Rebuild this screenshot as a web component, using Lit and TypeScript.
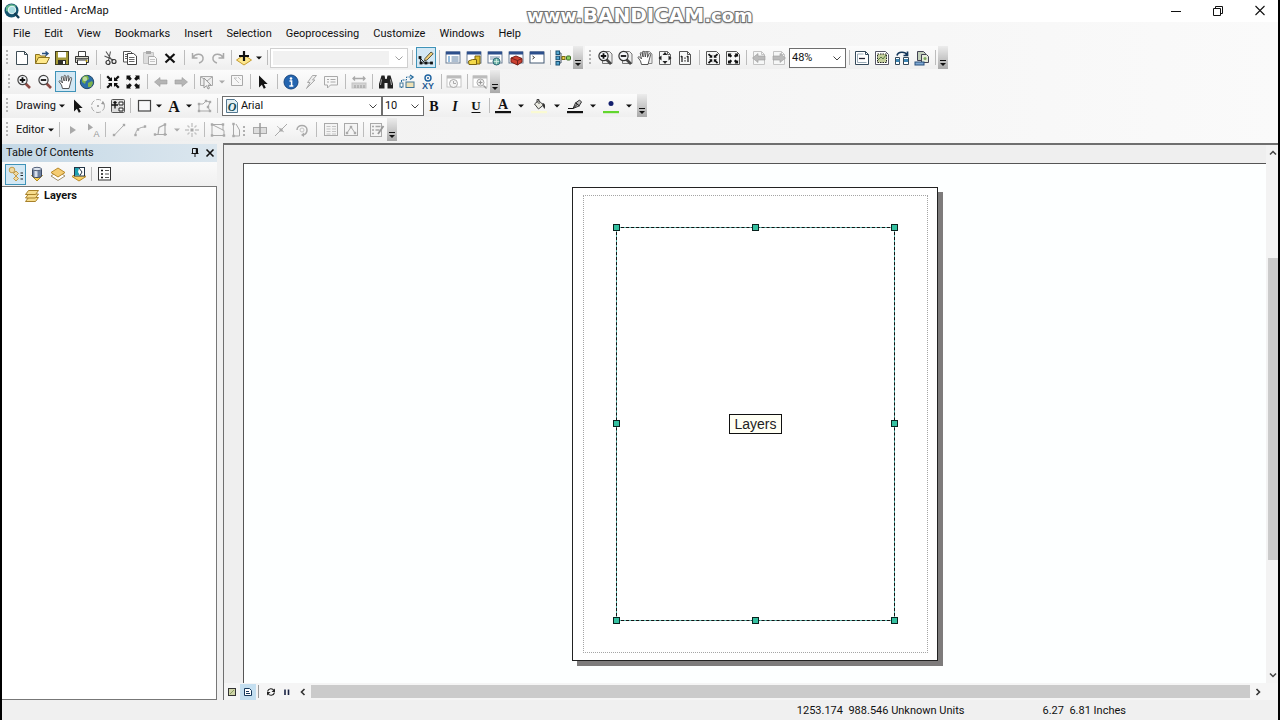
import { LitElement, html, svg, css, nothing } from "lit";
import type { TemplateResult } from "lit";
import { customElement, property } from "lit/decorators.js";
import { classMap } from "lit/directives/class-map.js";

const G = "#a9a9a9";
const L = "#c4c4c4";

const sheet = (c: string) => svg`<path d="M2.500 1.500h8l3 3v10h-11z" fill="#f6f7f7" stroke=${c}/><path d="M10.500 1.500v3h3" fill="none" stroke=${c}/>`;
const win = (c: string, line: string) => svg`<rect x="1" y="2" width="14" height="11" fill="#fff" stroke=${line}/><rect x="1" y="1.500" width="14" height="3" fill=${c}/>`;
const inward = (c: string) => svg`<g fill=${c}><path d="M7 7V3L5.800 4.200 3 1.400 1.400 3l2.800 2.800L3 7zM9 7V3l1.200 1.200L13 1.400 14.600 3l-2.800 2.800L13 7zM7 9v4l-1.200-1.200L3 14.600 1.400 13l2.800-2.800L3 9zM9 9v4l1.200-1.200 2.800 2.800 1.600-1.600-2.800-2.800L13 9z"/></g>`;
const outward = (c: string) => svg`<g fill=${c}><path d="M1.500 1.500h4.500L5 2.600 6.800 4.800 4.800 6.800 2.600 5 1.500 6zM14.500 1.500H10l1 1.100-1.800 2.200 2 2L13.400 5l1.100 1zM1.500 14.500H6l-1-1.100 1.800-2.200-2-2L2.600 11l-1.100-1zM14.500 14.500H10l1-1.100-1.800-2.200 2-2 2.200 1.800 1.100-1z"/></g>`;
const lens = (plus: boolean, c: string, handle: string) => svg`<path d="M9.500 9.500l4.500 4.500" stroke=${handle} stroke-width="2.600"/><circle cx="6.500" cy="6" r="4.600" fill="#f4f6f8" stroke=${c} stroke-width="1.200"/><path d=${plus ? "M3.800 6h5.400M6.500 3.300v5.400" : "M3.800 6h5.400"} stroke="#111" stroke-width="1.800"/>`;
const hand = svg`<path d="M4.500 14.500L3.500 11 1.200 7.800c-.5-1 .8-1.600 1.500-.8L4.500 9 3.300 3.600c-.2-1.300 1.200-1.500 1.600-.3L6.200 7 6 2.300c0-1.300 1.500-1.300 1.700 0L8.300 7l.9-4.600c.3-1.200 1.700-.9 1.600.3L10.500 7.300l1.600-3.400c.6-1 1.800-.4 1.500.7L12.200 10l-1.200 4.500z" fill="#fff" stroke="#444" stroke-width=".9"/>`;
const diamond = (y: number, fill: string, line: string) => svg`<path d=${`M8 ${y}l7 4.500-7 4.500-7-4.500z`} fill=${fill} stroke=${line}/>`;
const arrowBlock = (left: boolean, c: string) => svg`<path d=${left ? "M1.500 8L7 3.500V6h7v4H7v2.500z" : "M14.500 8L9 3.500V6H2v4h7v2.500z"} fill=${c} stroke="#9a9a9a" stroke-width=".6"/>`;
const cursor = (c: string) => svg`<path d="M4 1.500v12l2.900-2.700 1.900 4 2-1-1.900-3.800h3.800z" fill=${c}/>`;
const letterA = svg`<text x="8" y="11" text-anchor="middle" font-family="Liberation Serif, serif" font-weight="700" font-size="14" fill="#111">A</text>`;
const node = (x: number, y: number, c = G) => svg`<rect x=${x - 1.2} y=${y - 1.2} width="2.400" height="2.400" fill=${c}/>`;

const icons: Record<string, TemplateResult> = {
  app: svg`<circle cx="7.500" cy="7.500" r="7" fill="#15536e"/><path d="M2 4c3-4 8-3 10-1l-2 3-4-1-1 4-3-1z" fill="#5fb58c"/><circle cx="8" cy="7" r="3.800" fill="#a8dbe0" stroke="#e8f6f6"/><path d="M10.500 10l4.500 5" stroke="#123d55" stroke-width="2.400"/>`,
  new: svg`<path d="M2.500 1.500h8l3 3v10h-11z" fill="#fff" stroke="#3d4c55"/><path d="M10.500 1.500v3h3" fill="none" stroke="#3d4c55"/>`,
  open: svg`<path d="M1.500 13.500v-9h4l1 1.500h5v2" fill="#f0d35e" stroke="#8b7320"/><path d="M1.500 13.500l3-6h11l-3 6z" fill="#ffe98c" stroke="#8b7320"/><path d="M8 3.500h5M11.500 1.500l2.500 2-2.500 2.200" stroke="#27507f" stroke-width="1.400" fill="none"/>`,
  save: svg`<rect x="1.500" y="1.500" width="13" height="13" fill="#a59a38" stroke="#3f3c1f"/><rect x="4" y="2" width="8" height="5.500" fill="#fff"/><rect x="4" y="10" width="8" height="4.500" fill="#2f2f2a"/><rect x="9" y="11" width="2" height="3" fill="#fff"/>`,
  print: svg`<path d="M4.500 6V1.500h7V6" fill="#fff" stroke="#444"/><path d="M1.500 6.500h13v6h-13z" fill="#d8d8cc" stroke="#333"/><rect x="3.500" y="10" width="9" height="4.500" fill="#fff" stroke="#333"/><path d="M2 8.500h12" stroke="#555"/><circle cx="12.500" cy="11" r=".9" fill="#c9a500"/>`,
  cut: svg`<path d="M4 1.500l6 9M8.500 1.500l-2 9M2.500 6l9 4" stroke="#555" stroke-width="1.100"/><circle cx="6" cy="12.500" r="2" fill="none" stroke="#333" stroke-width="1.200"/><circle cx="12" cy="11.500" r="2" fill="none" stroke="#333" stroke-width="1.200"/>`,
  copy: svg`<path d="M1.500 1.500h7l1.500 1.500v9H1.500z" fill="#fff" stroke="#555"/><path d="M5.500 3.500h6l3 2.500v8.500h-9z" fill="#fff" stroke="#444"/><path d="M7 7.500h5.500M7 9.500h5.500M7 11.500h5.500M3 4.500h2M3 6.500h2M3 8.500h2" stroke="#666"/>`,
  paste: svg`<path d="M1.500 2.500h10v11h-10z" fill="#ddd" stroke=${L}/><rect x="4" y="1" width="5" height="3" fill=${G}/><path d="M6.500 6.500h6l2 2v6h-8z" fill="#f8f8f8" stroke=${G}/><path d="M8 9.500h5M8 11.500h5" stroke=${L}/>`,
  del: svg`<path d="M3.500 4l9 8.500M12.500 4l-9 8.500" stroke="#111" stroke-width="2.200"/>`,
  undo: svg`<path d="M2.500 3v5h5M3 7.500c2-4 9-4.500 10 0 .5 3-2 5-4 5.500" fill="none" stroke=${G} stroke-width="1.500"/>`,
  redo: svg`<path d="M13.500 3v5h-5M13 7.500c-2-4-9-4.500-10 0-.5 3 2 5 4 5.500" fill="none" stroke=${G} stroke-width="1.500"/>`,
  add: svg`<path d="M8 5l7.500 5L8 15 .5 10z" fill="#fce68d" stroke="#c79c2c"/><path d="M8 1v10M3 6h10" stroke="#111" stroke-width="2.200"/>`,
  sketch: svg`<path d="M2 8l4.500 4.500M2 8l1 5h10.500" stroke="#222" fill="none"/><path d="M7 8.500l6-6.500 2.200 1.700L9 10l-2.500.9z" fill="#f3d27a" stroke="#554"/>${[[2, 7.5], [3, 13], [8, 13], [13.5, 13]].map(([x, y]) => svg`<rect x=${x - 1.4} y=${y - 1.4} width="2.800" height="2.800" fill="#111"/>`)}`,
  wTable: svg`${win("#2c4f8c", "#6d7f95")}<path d="M3 7h2M3 9h2M3 11h2" stroke="#2c7cc0"/><path d="M6.500 7h7M6.500 9h7M6.500 11h7" stroke="#5c7fa3"/>`,
  wCatalog: svg`${win("#2c4f8c", "#6d7f95")}<path d="M9 6h5v8H9z" fill="#e0c02b" stroke="#7a6310"/><path d="M2.500 11l4-1.500h4v5H3z" fill="#f3d94a" stroke="#7a6310"/>`,
  wSearch: svg`${win("#2c4f8c", "#6d7f95")}<path d="M3 7h10M3 9h4" stroke="#7a93ad"/><circle cx="9.500" cy="11.500" r="3.500" fill="#74b9a9" stroke="#2b6678"/><path d="M7 11.500h5M9.500 9v5" stroke="#d7efe8" stroke-width=".8"/>`,
  wToolbox: svg`${win("#2c4f8c", "#6d7f95")}<path d="M3 8l5-2 6 2.500V12l-4.500 3L3 12z" fill="#cc4030" stroke="#75211a"/><path d="M3 8l6.500 2.500 4.500-2M9.500 10.500V15" fill="none" stroke="#75211a"/>`,
  wPython: svg`${win("#2c4f8c", "#445a75")}<path d="M3.500 6l2 1.500-2 1.500" fill="none" stroke="#333"/>`,
  model: svg`<path d="M4 3h2v10H4M6 8h4" fill="none" stroke="#456"/><g stroke="#1b5275" fill="#54a6cf"><rect x="1" y="1" width="3.500" height="3.500"/><rect x="1" y="6.200" width="3.500" height="3.500"/><rect x="1" y="11.500" width="3.500" height="3.500"/></g><rect x="7" y="6.500" width="3" height="3" fill="#f2d44f" stroke="#7a6a10"/><rect x="11.500" y="6" width="4" height="4" rx="1" fill="#8ccf5e" stroke="#3d6b22"/>`,
  pZoomIn: svg`<path d="M5.500 1.500h7l2.500 2.500v9.500H5.500z" fill="#eee" stroke="#777"/>${lens(true, "#333", "#444")}`,
  pZoomOut: svg`<path d="M5.500 1.500h7l2.500 2.500v9.500H5.500z" fill="#eee" stroke="#777"/>${lens(false, "#333", "#444")}`,
  pHand: svg`<path d="M5.500 1.500h7l2.500 2.500v9.500H5.500z" fill="#eee" stroke="#888"/>${hand}`,
  pFull: svg`${sheet("#666")}<path d="M8 2l2.500 3h-5zM8 14l2.500-3h-5zM1.500 8l3-2.500v5zM14.500 8l-3-2.500v5z" fill="#222"/>`,
  p11: svg`${sheet("#555")}<path d="M5 6v6M3.800 7L5 6M11 6v6M9.800 7L11 6M8 7.500v1.300M8 10.200v1.300" stroke="#222" stroke-width="1.300"/>`,
  pIn: svg`<path d="M1.500 1.500h10l3 3v10h-13z" fill="#f6f7f7" stroke="#555"/><g transform="translate(1.800 2.300) scale(.78)">${inward("#111")}</g>`,
  pOut: svg`<path d="M1.500 1.500h10l3 3v10h-13z" fill="#f6f7f7" stroke="#555"/><g transform="translate(1.800 2.300) scale(.78)">${outward("#111")}</g>`,
  pBack: svg`${sheet(L)}${arrowBlock(true, "#bbb")}`,
  pNext: svg`${sheet(L)}${arrowBlock(false, "#bbb")}`,
  draft: svg`<path d="M1.500 1.500h10l3 3v10h-13z" fill="#fff" stroke="#34495a"/><path d="M11.500 1.500v3h3" fill="none" stroke="#34495a"/><path d="M3.500 4h6M3.500 12.500h9M3.500 4v8.500" stroke="#9aabb8" fill="none"/><path d="M5 8.500h6" stroke="#223" stroke-width="1.300"/>`,
  focus: svg`<path d="M1.500 1.500h10l3 3v10h-13z" fill="#fff" stroke="#556"/><rect x="3.500" y="4" width="9" height="8.500" fill="#c5cf9c" stroke="#222" stroke-dasharray="1.500 1"/><path d="M4 10l3-3 2 2 3-4" stroke="#557744" fill="none"/>`,
  layout: svg`<path d="M1.500 7.500h4v7h-4zM9.500 7.500h5v7h-5z" fill="#fff" stroke="#34495a"/><path d="M10 10.500h4M2 10.500h3.500" stroke="#3c86b4" stroke-width="3"/><path d="M3 5.500c1-4 8-4.500 10-.5M13.500 1.500v4h-4" fill="none" stroke="#17395c" stroke-width="1.700"/>`,
  pages: svg`<path d="M3.500 1.500h6l2 2v7h-8z" fill="#c3d0bb" stroke="#445"/><path d="M7.500 4.500h5l2 2v6h-7z" fill="#e6ecd9" stroke="#445"/><circle cx="11" cy="8.500" r="1.500" fill="#7fa863"/><rect x="1" y="12" width="9" height="3" fill="#7fa8d3" stroke="#28507c"/>`,
  zoomIn: lens(true, "#444", "#8d4b45"),
  zoomOut: lens(false, "#444", "#8d4b45"),
  hand,
  globe: svg`<circle cx="8" cy="8" r="6.700" fill="#2b6ea8" stroke="#24496b"/><path d="M3 4c2-3 5-3 6-2l1 3-3 2-1 3-3-2zM9 9l4-2 1 2-2 4-3 0z" fill="#7db24a"/><circle cx="6" cy="5" r="2.200" fill="#e9f5dc" opacity=".6"/>`,
  inward: inward("#111"),
  outward: outward("#111"),
  back: arrowBlock(true, "#b5b5b5"),
  next: arrowBlock(false, "#b5b5b5"),
  selFeat: svg`<path d="M1.500 2.500h12v9h-12z" fill="#eee" stroke=${G}/><path d="M2 3l6 4 5-4" stroke=${G} fill="none"/><path d="M5 4v10l2.500-2.300L9 15l1.500-.8-1.500-3h3z" fill="#f4f4f4" stroke="#999"/>`,
  clearSel: svg`<path d="M2.500 1.500h11v10h-11z" fill="#f7f7f7" stroke=${G}/><path d="M5 4l5 5M5 4h3M9 3l3 3" stroke=${L} fill="none"/>`,
  cursor: cursor("#151515"),
  info: svg`<circle cx="8" cy="8" r="7" fill="#2465b0" stroke="#174680"/><circle cx="8" cy="4.500" r="1.300" fill="#fff"/><path d="M6.500 7H8.600v5M6.300 12h4" stroke="#fff" stroke-width="1.500" fill="none"/>`,
  bolt: svg`<path d="M9.500 1.500h4L9.500 6h2.500L3.500 14.500 7 8.500H4.500z" fill="#eee" stroke=${G}/>`,
  popup: svg`<path d="M1.500 2.500h13v8.500H7.500L4.500 14v-3h-3z" fill="#f7f7f7" stroke=${G}/><path d="M4 5.500h2M7.500 5.500h5M4 8h2M7.500 8h5" stroke=${G}/>`,
  measure: svg`<path d="M2 4.500h12M4 2.500L2 4.500l2 2M12 2.500l2 2-2 2" stroke=${G} fill="none" stroke-width="1.300"/><rect x="1" y="9" width="14" height="5" fill="#d4d4d4" stroke=${L}/><path d="M4 11v3M7 11v3M10 11v3M13 11v3" stroke="#999"/>`,
  find: svg`<path d="M3.500 1.500h3L7.300 5h1.400l.8-3.500h3L15 10v4.500h-5.500V9h-3v5.500H1V10z" fill="#222"/><path d="M3.500 5.500L2.500 11M12.500 5.500l1 5.500" stroke="#aaa"/>`,
  route: svg`<path d="M2.500 14V6h5v-3h5" fill="none" stroke="#23699b" stroke-dasharray="2 1"/><path d="M11 1l3 2-3 2.500" fill="none" stroke="#23699b" stroke-width="1.400"/><rect x="7" y="8" width="8" height="5.500" fill="#eee0b4" stroke="#3d7498"/><rect x="1" y="9" width="3" height="4" fill="#fff" stroke="#3d7498"/>`,
  xy: svg`<circle cx="8" cy="4" r="3" fill="none" stroke="#1e63a0" stroke-width="1.400"/><circle cx="8" cy="4" r="1" fill="#1e63a0"/><text x="8" y="15" text-anchor="middle" font-family="Liberation Sans, sans-serif" font-size="9" font-weight="700" fill="#1e5a94">XY</text>`,
  time: svg`${win("#bcbcbc", L)}<circle cx="7.500" cy="9.500" r="4" fill="#f3f3f3" stroke=${G}/><path d="M7.500 7v2.500H10" stroke=${G} fill="none"/>`,
  viewer: svg`${win("#bcbcbc", L)}<circle cx="8.500" cy="8.500" r="3.500" fill="#f3f3f3" stroke=${G}/><path d="M8.500 6.500v4M6.500 8.500h4M11.500 11.500l3 3" stroke="#999" stroke-width="1.200"/>`,
  rotate: svg`<circle cx="8" cy="8" r="6.500" fill="none" stroke=${G} stroke-dasharray="5 2"/><circle cx="8" cy="8" r="1" fill="#999"/><path d="M13 3l1.500 3.500L11 6z" fill="#999"/>`,
  zoomSel: svg`<rect x="1.500" y="1.500" width="13" height="13" rx="1" fill="#ddd" stroke="#555"/><path d="M5 3.500v7M1.500 7H8M5 3.500L3.500 5M5 3.500L6.500 5" stroke="#111" stroke-width="1.300"/><path d="M9 4h4v3H9zM9 10h4v3H9z" fill="#fff" stroke="#222"/>`,
  rect: svg`<rect x="2.500" y="2.500" width="12" height="10.500" fill="#f8f8fa" stroke="#444" stroke-width="1.200"/>`,
  textA: svg`<text x="8" y="13.500" text-anchor="middle" font-family="Liberation Serif, serif" font-weight="700" font-size="16" fill="#111">A</text>`,
  vertices: svg`<path d="M3 13V6l4 0 3-3 4 1-2 5 2 4z" fill="none" stroke=${G}/>${[[3, 13], [3, 6], [10, 3], [14, 4], [12, 9], [14, 13]].map(([x, y]) => node(x, y))}`,
  bold: svg`<text x="8" y="13" text-anchor="middle" font-family="Liberation Serif, serif" font-weight="700" font-size="14" fill="#111">B</text>`,
  italic: svg`<text x="8" y="13" text-anchor="middle" font-family="Liberation Serif, serif" font-weight="700" font-style="italic" font-size="14" fill="#111">I</text>`,
  underline: svg`<text x="8" y="12" text-anchor="middle" font-family="Liberation Serif, serif" font-weight="700" font-size="13" fill="#111">U</text><path d="M3.500 14.500h9" stroke="#111"/>`,
  fontColor: svg`${letterA}<rect x="0" y="13" width="16" height="2.200" fill="#111"/>`,
  fill: svg`<path d="M3.500 6l4-3.500 5 4.500-5 4z" fill="#e9e9e0" stroke="#444"/><path d="M6 5V1.500h2V6" fill="none" stroke="#444"/><path d="M11.500 5c3 0 3 4 2 6-1-1-1.500-3-2-4z" fill="#333"/><rect x="0" y="13" width="16" height="2.200" fill="#fafad2"/>`,
  pen: svg`<path d="M1 10.500h5" stroke="#111"/><path d="M6 10.500L8.500 5l4-3 2 2-2.500 4z" fill="#bbb" stroke="#333"/><path d="M6 10.500l4.500-4.500M8.500 4.500l4 3.500" stroke="#111"/><rect x="0" y="13" width="16" height="2.200" fill="#111"/>`,
  marker: svg`<circle cx="8" cy="5.500" r="2.500" fill="#14206e"/><rect x="0" y="13" width="16" height="2.200" fill="#62d62d"/>`,
  edit: svg`<path d="M5 4v8l6-4z" fill=${G}/>`,
  editA: svg`<path d="M3 1.500v7l5-3z" fill=${G}/><text x="11.500" y="14.500" text-anchor="middle" font-family="Liberation Sans, sans-serif" font-size="9" fill="#999">A</text>`,
  seg: svg`<path d="M3 13.500L13 3" stroke=${G}/>${node(3, 13)}${node(13, 3)}`,
  arc: svg`<path d="M3.500 13c0-5 4-8 9.500-8" stroke=${G} fill="none"/>${node(3.5, 13)}${node(6, 7.5)}${node(13, 4.5)}`,
  trace: svg`<path d="M2 12.500h12M5 12.500l1-7 6-3v10" stroke=${G} fill="none" stroke-width="1.200"/>${node(2, 12.5)}${node(12, 12.5)}${node(12, 2.5)}`,
  point: svg`<path d="M8 1v4M8 11v4M1 8h4M11 8h4M3.500 3.500l2 2M10.500 10.500l2 2M12.500 3.500l-2 2M5.500 10.500l-2 2" stroke=${L} stroke-width="1.400"/><rect x="6.500" y="6.500" width="3" height="3" fill=${G}/>`,
  editVert: svg`<path d="M2 2.500v11h12v-5L2 2.500h11v6" stroke=${G} fill="none"/>${node(2, 2.5)}${node(2, 13.5)}${node(14, 13.5)}${node(13, 2.5)}`,
  reshape: svg`<path d="M2.500 2v12h6V8L5 2" stroke=${G} fill="none"/><path d="M13 4v10" stroke="#999" stroke-dasharray="2 2" stroke-width="1.500"/>${node(2.5, 2)}${node(2.5, 14)}`,
  split: svg`<rect x="1.500" y="5.500" width="13" height="6" fill="#ddd" stroke=${G}/><path d="M8 1v14" stroke="#999" stroke-width="1.500"/>`,
  cutLine: svg`<path d="M2 14L14 2" stroke=${G}/><path d="M4 4l4 4 3 2" stroke=${L}/><rect x="6.500" y="6.500" width="3" height="3" fill=${G}/>`,
  rotateEdit: svg`<path d="M3 8c0-6 10-6 10 0 0 3-2 4.500-4 5" fill="none" stroke=${G} stroke-width="1.500"/><circle cx="8" cy="8" r="2" fill="none" stroke=${L}/><path d="M10 10.500l-3 2.500 3 2z" fill=${G}/>`,
  attrs: svg`<rect x="1.500" y="1.500" width="13" height="12" fill="#f4f4f4" stroke=${G}/><path d="M3.500 4.500h4M9 4.500h4M3.500 7h4M9 7h4M3.500 9.500h4M9 9.500h4M3.500 12h4M9 12h4" stroke=${L}/>`,
  sketchProps: svg`<rect x="1.500" y="1.500" width="13" height="12" fill="#f4f4f4" stroke=${G}/><path d="M4 11l4-6 4 6" fill="none" stroke=${G}/>${node(4, 11)}${node(8, 5)}${node(12, 11)}`,
  create: svg`<rect x="1.500" y="1.500" width="11" height="13" fill="#f4f4f4" stroke=${G}/><path d="M3 4.500h2M6.500 4.500h5M3 8h2M6.500 8h4M3 11.500h2" stroke=${G} stroke-width="1.500"/><path d="M9 12l5.500-8" stroke="#999" stroke-width="1.800"/>`,
  byOrder: svg`<path d="M4 4l4 6" stroke="#99a" fill="none"/><circle cx="4" cy="4" r="2.800" fill="#f0d9a0" stroke="#c19c4c"/><path d="M8 5l2.500 2.500L8 10 5.500 7.500zM8 10l2.500 2.500L8 15l-2.500-2.500z" fill="#f0d9a0" stroke="#c19c4c"/><path d="M12.500 7h2.500M12.500 9.500h2.500M12.500 13h2.500" stroke="#222"/>`,
  bySource: svg`<path d="M2.500 9.500h11L8 15z" fill="#f5cf58" stroke="#b58c1e"/><path d="M3.500 3v7c0 2 9 2 9 0V3z" fill="#6d7f9d" stroke="#3b4964"/><rect x="5.500" y="4" width="3" height="7" fill="#d7dfec"/><ellipse cx="8" cy="3" rx="4.500" ry="1.700" fill="#dbe3ee" stroke="#55627b"/>`,
  byVisible: svg`${diamond(5.5, "#fff", "#a08f6a")}${diamond(2, "#f5cc72", "#b98928")}`,
  bySelection: svg`${diamond(6, "#f7d066", "#b98928")}<rect x="3.500" y="1.500" width="10" height="8.500" fill="#fff" stroke="#234"/><path d="M4 2h4l-1 4 2 3.500H4z" fill="#1ca0b0"/><path d="M8 2l3 4-2 3.500" fill="none" stroke="#234"/>`,
  options: svg`<rect x="1.500" y="1.500" width="12" height="12.500" fill="#fff" stroke="#333"/><path d="M4 4.500h2M4 8h2M4 11.500h2" stroke="#111" stroke-width="1.600"/><path d="M8 4.500h4M8 8h4M8 11.500h4" stroke="#555"/>`,
  layers: svg`<g fill="#f7dc8c" stroke="#a8812a"><path d="M4.500 9.500h10l-3 4H1.500z"/><path d="M4.500 6h10l-3 4H1.500z"/><path d="M4.500 2.500h10l-3 4H1.500z"/></g>`,
  fontO: svg`<path d="M2.500 1.500h8l3 3v10h-11z" fill="#e4f0f4" stroke="#557890"/><text x="8" y="13" text-anchor="middle" font-family="Liberation Serif, serif" font-style="italic" font-weight="700" font-size="12" fill="#114a54">O</text>`,
  pin: svg`<path d="M5.500 3.500h5v5h-5zM4.500 8.500h7M8 8.500V12" fill="none" stroke="#111"/><path d="M9.500 3.500v5" stroke="#111" stroke-width="1.400"/>`,
  close: svg`<path d="M4.500 4.500l7 7M11.500 4.500l-7 7" stroke="#111" stroke-width="1.600"/>`,
  min: svg`<path d="M3 8.500h10" stroke="#111"/>`,
  restore: svg`<path d="M3.500 5.500h7v7h-7zM5.500 5.500v-2h7v7h-2" fill="none" stroke="#111"/>`,
  winClose: svg`<path d="M3.500 3l9 9M12.500 3l-9 9" stroke="#111" stroke-width="1.100"/>`,
  dataView: svg`<rect x="4.500" y="4.500" width="7" height="7" fill="#cfd5a8" stroke="#333"/><path d="M6 10l4-4" stroke="#889960"/>`,
  layoutView: svg`<path d="M4.500 4.500h5l2 2v5h-7z" fill="#fff" stroke="#17395c"/><path d="M6 7.500h3M6 9.500h4" stroke="#17395c"/>`,
  refresh: svg`<path d="M4.500 7.500c1-3.500 5-3.500 6.500-1M11.500 8.500c-1 3.500-5 3.500-6.500 1" fill="none" stroke="#222" stroke-width="1.100"/><path d="M12 4.500V8H8.500zM4 11.500V8h3.500z" fill="#222"/>`,
  pause: svg`<path d="M6 5.500v5.500M9.500 5.500v5.500" stroke="#1b2444" stroke-width="1.600"/>`,
  left: svg`<path d="M9.500 5l-3 3 3 3" fill="none" stroke="#333" stroke-width="1.600"/>`,
  right: svg`<path d="M6.500 5l3 3-3 3" fill="none" stroke="#333" stroke-width="1.600"/>`,
  up: svg`<path d="M5 9.500l3-3 3 3" fill="none" stroke="#444" stroke-width="1.500"/>`,
  down: svg`<path d="M5 6.500l3 3 3-3" fill="none" stroke="#444" stroke-width="1.500"/>`,
  chevron: svg`<path d="M4.500 6.500L8 10l3.500-3.500" fill="none" stroke="#444"/>`,
  drop: svg`<path d="M5 6.500h6L8 9.500z" fill="#111"/>`,
  dropOff: svg`<path d="M5 6.500h6L8 9.500z" fill="#aaa"/>`,
  more: svg`<path d="M5 7.500h6" stroke="#111"/><path d="M5 10h6l-3 3z" fill="#111"/>`,
};

const icon = (name: string) => html`<svg class="icon" viewBox="0 0 16 16" width="16" height="16" aria-hidden="true">${icons[name]}</svg>`;

interface Tool {
  kind: "btn" | "sep" | "drop" | "menu" | "combo";
  name?: string;
  label?: string;
  cls?: string;
  off?: boolean;
}

const b = (names: string, cls = ""): Tool[] => names.split(" ").map((name) => ({ kind: "btn", name, cls }));
const sep: Tool = { kind: "sep" };
const thin: Tool = { kind: "sep", cls: "thin" };
const drop = (cls = "", off = false): Tool => ({ kind: "drop", cls, off });
const combo = (label: string, name: string, cls: string, off = false): Tool => ({ kind: "combo", label, name, cls, off });

const standard: Tool[] = [
  ...b("new open save print"), sep, ...b("cut copy paste del"), sep, ...b("undo redo"), thin,
  ...b("add"), drop(), thin, combo("", "Map scale", "scale", true), sep, ...b("sketch", "on"), thin,
  ...b("wTable wCatalog wSearch wToolbox wPython", "wide"), thin, ...b("model"),
];
const layoutBar: Tool[] = [
  ...b("pZoomIn pZoomOut pHand pFull p11"), sep, ...b("pIn pOut"), thin, ...b("pBack pNext"),
  combo("48%", "Page zoom", "zoom"), thin, ...b("draft focus layout pages"), thin,
];
const tools: Tool[] = [
  ...b("zoomIn"), ...b("zoomOut hand globe", "wide"), thin, ...b("inward outward"), sep, ...b("back next"), thin,
  ...b("selFeat"), drop("", true), ...b("clearSel"), thin, ...b("cursor"), sep, ...b("info bolt popup"), sep,
  ...b("measure"), thin, ...b("find route xy", "wide"), thin, ...b("time"), thin, ...b("viewer"),
];
const drawing: Tool[] = [
  { kind: "menu", label: "Drawing" }, ...b("cursor rotate zoomSel"), thin, ...b("rect"), drop(), ...b("textA"), drop(),
  ...b("vertices"), sep, combo("Arial", "Font", "font"), combo("10", "Font size", "size"),
  ...b("bold italic underline", "wide"), thin, ...b("fontColor"), drop("roomy"), ...b("fill"), drop("roomy"),
  ...b("pen"), drop("roomy"), ...b("marker"), drop("roomy"),
];
const editor: Tool[] = [
  { kind: "menu", label: "Editor" }, thin, ...b("edit editA"), thin, ...b("seg arc trace", "wide"), drop("", true),
  ...b("point"), thin, ...b("editVert reshape split cutLine rotateEdit", "wide"), sep,
  ...b("attrs sketchProps"), thin, ...b("create"),
];

const base = css`
  * { box-sizing: border-box; }
  button, select {
    font: inherit; color: inherit; margin: 0; padding: 0; border: 0; border-radius: 0; background: none;
  }
  .icon { display: block; flex: none; overflow: visible; }
`;

@customElement("tool-bar")
export class ToolBar extends LitElement {
  @property({ attribute: false }) items: Tool[] = [];

  static styles = [base, css`
    :host {
      display: flex; align-items: center; height: 23px; flex: none;
      background: linear-gradient(#fcfcfc, #f5f5f5 60%, #efefef);
    }
    .grip {
      width: 2px; height: 15px; margin: 0 4px; flex: none;
      background: repeating-linear-gradient(#b4b4b4 0 2px, transparent 2px 4px);
    }
    .btn { width: 20px; height: 21px; display: flex; align-items: center; justify-content: center; flex: none; }
    .btn.wide { width: 21px; }
    .btn.on { background: #d3e8f4; border: 1px solid #3f93b8; }
    .sep { width: 8px; height: 15px; flex: none; background: linear-gradient(#bcbcbc, #bcbcbc) center / 1px 100% no-repeat; }
    .sep.thin { width: 6px; }
    .drop { width: 10px; height: 21px; flex: none; display: flex; align-items: center; justify-content: center; }
    .drop.roomy { width: 16px; }
    .menu { height: 21px; padding: 0 4px; display: flex; align-items: center; white-space: nowrap; }
    .menu .icon { margin: 0 -6px 0 -2px; }
    .combo { position: relative; height: 20px; flex: none; display: flex; }
    .combo select {
      appearance: none; width: 100%; height: 100%; padding: 0 18px 0 2px; border: 1px solid #6e6e6e; background: #fff; opacity: 1;
    }
    .combo.scale { width: 138px; }
    .combo.scale select { border: 3px solid #fff; outline: 1px solid #cfcfcf; outline-offset: -1px; background: linear-gradient(90deg, #f1f1f1 116px, #fff 116px) padding-box; }
    .combo.zoom { width: 57px; }
    .combo.font { width: 160px; }
    .combo.font select { padding-left: 18px; }
    .combo.size { width: 42px; }
    .arrow { position: absolute; right: 1px; top: 2px; pointer-events: none; }
    .scale .arrow { opacity: 0.5; }
    .glyph { position: absolute; left: 2px; top: 2px; pointer-events: none; }
    .more {
      width: 10px; height: 23px; overflow: hidden; flex: none; display: flex; justify-content: center; align-items: flex-end;
      background: linear-gradient(#ececec, #a9a9a9);
    }
  `];

  private tool(t: Tool) {
    switch (t.kind) {
      case "sep":
        return html`<span class=${classMap({ sep: true, thin: t.cls === "thin" })}></span>`;
      case "drop":
        return html`<button class=${classMap({ drop: true, roomy: t.cls === "roomy" })} aria-label="More choices">${icon(t.off ? "dropOff" : "drop")}</button>`;
      case "menu":
        return html`<button class="menu"><span>${t.label}</span>${icon("drop")}</button>`;
      case "combo":
        return html`<span class="combo ${t.cls}">
          <select aria-label=${t.name!} ?disabled=${!!t.off}><option>${t.label}</option></select>
          ${t.cls === "font" ? html`<span class="glyph">${icon("fontO")}</span>` : nothing}
          <span class="arrow">${icon("chevron")}</span>
        </span>`;
      default:
        return html`<button class="btn ${t.cls ?? ""}${t.name === "hand" ? " on" : ""}" aria-label=${t.name!}>${icon(t.name!)}</button>`;
    }
  }

  render() {
    return html`<span class="grip"></span>${this.items.map((t) => this.tool(t))}<button class="more" aria-label="Toolbar options">${icon("more")}</button>`;
  }
}

@customElement("contents-panel")
export class ContentsPanel extends LitElement {
  static styles = [base, css`
    :host { display: flex; flex-direction: column; min-height: 0; }
    .head { display: flex; align-items: center; height: 18px; padding: 0 0 0 4px; background: linear-gradient(90deg, #c4d8e6, #dbe6ee); }
    .title { flex: 1; font: inherit; margin: 0; }
    .head button { width: 15px; display: flex; justify-content: center; }
    .tools { display: flex; align-items: center; height: 24px; background: linear-gradient(#fafafa, #f0f0f0); padding: 0 3px; }
    .tools button { width: 21px; height: 21px; display: flex; align-items: center; justify-content: center; }
    .tools button.on { background: #d3e8f4; border: 1px solid #3f93b8; }
    .tools i { width: 1px; height: 14px; background: #bbb; margin: 0 2px; }
    .list { flex: 1; margin: 0; padding: 1px 0 0 22px; list-style: none; background: #fff; border: solid #777; border-width: 1px 1px 1px 0; }
    .list li { display: flex; align-items: center; gap: 4px; font-weight: 700; height: 16px; }
  `];

  render() {
    return html`
      <div class="head"><h2 class="title">Table Of Contents</h2>
        <button aria-label="Auto hide">${icon("pin")}</button><button aria-label="Close">${icon("close")}</button></div>
      <div class="tools">
        <button class="on" aria-label="List by drawing order">${icon("byOrder")}</button>
        <button aria-label="List by source">${icon("bySource")}</button>
        <button aria-label="List by visibility">${icon("byVisible")}</button>
        <button aria-label="List by selection">${icon("bySelection")}</button>
        <i></i>
        <button aria-label="Options">${icon("options")}</button>
      </div>
      <ul class="list"><li>${icon("layers")}<span>Layers</span></li></ul>`;
  }
}

@customElement("layout-view")
export class LayoutView extends LitElement {
  static styles = [base, css`
    :host { display: flex; flex-direction: column; min-width: 0; border: solid #6f6f6f; border-width: 2px 0 0 1px; background: #efefef; }
    .main { flex: 1; display: flex; min-height: 0; }
    .canvas {
      flex: 1; display: flex; align-items: center; justify-content: center; margin: 18px 0 0 19px;
      border: solid #555; border-width: 1px 0 0 1px; background: #fdffff;
    }
    .page { width: 366px; height: 474px; padding: 7px 9px 7px 10px; background: #fff; border: 1px solid #222; box-shadow: 5px 5px 0 #7d7b7b; }
    .printable { height: 100%; padding: 31px 32px; border: 1px dotted #a5a5a5; }
    .frame {
      position: relative; height: 100%; display: flex; align-items: center; justify-content: center; border: 1px dashed #111;
      background: linear-gradient(#fff, #fff) padding-box, linear-gradient(#5cb8ae, #5cb8ae) border-box;
    }
    .name { border: 1px solid #111; background: #fffff4; padding: 0 4px; line-height: 18px; font-family: "Liberation Sans", Arial, sans-serif; font-size: 14px; color: #222; }
    .handle { position: absolute; width: 7px; height: 7px; margin: -4px; border: 1px solid #08211d; background: #35c0a0; }
    .t { top: 0; } .m { top: 50%; } .b { top: calc(100% + 1px); }
    .l { left: 0; } .c { left: 50%; } .r { left: calc(100% + 1px); }
    .vbar { width: 12px; display: flex; flex-direction: column; align-items: center; justify-content: space-between; background: #f3f3f3; }
    .vbar button { width: 10px; margin-left: 2px; display: flex; justify-content: center; }
    .vtrack { flex: 1; width: 10px; margin-left: 2px; display: flex; flex-direction: column; }
    .vtrack::before { content: ""; flex: 97; }
    .vthumb { flex: 303; background: #cbcbcb; }
    .vtrack::after { content: ""; flex: 107; }
    .nav { display: flex; height: 17px; align-items: center; background: #f5f5f5; }
    .nav button { height: 16px; width: 16px; display: flex; justify-content: center; overflow: hidden; }
    .nav button.on { background: #c4dff0; }
    .nav i { width: 1px; height: 13px; background: #999; margin: 0 4px 0 2px; }
    .hthumb { flex: 1; height: 13px; background: #cbcbcb; }
    .corner { width: 12px; }
  `];

  render() {
    const spots = ["t l", "t c", "t r", "m l", "m r", "b l", "b c", "b r"];
    return html`
      <div class="main">
        <div class="canvas"><div class="page"><div class="printable"><div class="frame">
          <span class="name">Layers</span>
          ${spots.map((s) => html`<span class="handle ${s}"></span>`)}
        </div></div></div></div>
        <div class="vbar"><button aria-label="Scroll up">${icon("up")}</button>
          <div class="vtrack"><div class="vthumb"></div></div>
          <button aria-label="Scroll down">${icon("down")}</button></div>
      </div>
      <div class="nav">
        <button aria-label="Data view">${icon("dataView")}</button>
        <button class="on" aria-label="Layout view">${icon("layoutView")}</button><i></i>
        <button aria-label="Refresh">${icon("refresh")}</button>
        <button aria-label="Pause drawing">${icon("pause")}</button>
        <button aria-label="Scroll left">${icon("left")}</button>
        <div class="hthumb"></div>
        <button aria-label="Scroll right">${icon("right")}</button><span class="corner"></span>
      </div>`;
  }
}

@customElement("app-root")
export class AppRoot extends LitElement {
  static styles = [base, css`
    :host {
      display: flex; flex-direction: column; min-height: 100vh; border: solid #000; border-width: 0 2px; position: relative;
      background: linear-gradient(90deg, #efefef, #fafafa); color: #111;
      font: 11px/16px Roboto, "Noto Sans", sans-serif;
    }
    .title { display: flex; align-items: center; height: 22px; padding-left: 2px; gap: 4px; background: #fff; }
    .title h1 { flex: 1; margin: 0; font: inherit; }
    .winbtns { display: flex; gap: 6px; }
    .winbtns button { width: 36px; height: 20px; display: flex; align-items: center; justify-content: center; }
    .mark {
      position: absolute; top: 3px; left: 0; right: 0; text-align: center; line-height: 24px; pointer-events: none;
      font-family: "DejaVu Sans", sans-serif; font-weight: 700; font-size: 18px; color: #fff;
      -webkit-text-stroke: 2px #777; paint-order: stroke fill; text-shadow: 0 0 2px #666, 0 1px 2px #777;
    }
    .mark b { font-size: 20px; }
    .menus { display: flex; height: 23px; align-items: center; padding: 0 4px; }
    .menus button { padding: 0 7px; }
    .bars { display: flex; flex-direction: column; gap: 1px; padding: 1px 0 2px; align-items: flex-start; }
    .row { display: flex; gap: 2px; }
    .row.inset { padding-left: 2px; }
    .work { flex: 1; display: flex; gap: 6px; min-height: 0; background: #f0f0f0; }
    .toc { width: 215px; padding-top: 1px; flex: none; }
    .view { flex: 1; }
    .status { display: flex; height: 20px; align-items: center; justify-content: flex-end; gap: 78px; padding-right: 152px; background: #f0f0f0; padding-top: 2px; white-space: pre; }
  `];

  render() {
    return html`
      <header class="title">${icon("app")}<h1>Untitled - ArcMap</h1>
        <div class="winbtns">
          <button aria-label="Minimize">${icon("min")}</button>
          <button aria-label="Restore">${icon("restore")}</button>
          <button aria-label="Close">${icon("winClose")}</button>
        </div>
      </header>
      <div class="mark">www.<b>BANDICAM</b>.com</div>
      <nav class="menus">${["File", "Edit", "View", "Bookmarks", "Insert", "Selection", "Geoprocessing", "Customize", "Windows", "Help"].map((m) => html`<button>${m}</button>`)}</nav>
      <div class="bars">
        <div class="row"><tool-bar .items=${standard}></tool-bar><tool-bar .items=${layoutBar}></tool-bar></div>
        <div class="row inset"><tool-bar .items=${tools}></tool-bar></div>
        <div class="row"><tool-bar .items=${drawing}></tool-bar></div>
        <div class="row"><tool-bar .items=${editor}></tool-bar></div>
      </div>
      <main class="work"><contents-panel class="toc"></contents-panel><layout-view class="view"></layout-view></main>
      <footer class="status"><span>1253.174  988.546 Unknown Units</span><span>6.27  6.81 Inches</span></footer>`;
  }
}
